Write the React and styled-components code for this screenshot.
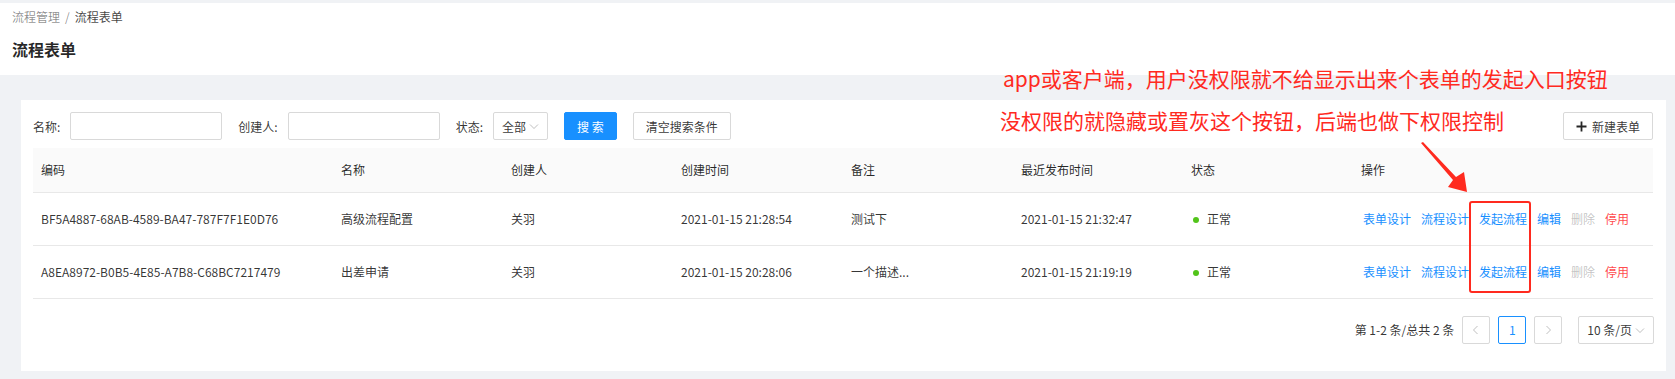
import React from 'react';
import styled, { createGlobalStyle } from 'styled-components';

const GlobalStyle = createGlobalStyle`
  * { box-sizing: border-box; }
  body {
    margin: 0;
    background: #f0f2f5;
    font-family: "Noto Sans CJK SC", "Noto Sans", sans-serif;
    color: rgba(0, 0, 0, 0.65);
  }
`;

const Page = styled.div`
  position: relative;
  width: 1675px;
  height: 379px;
  padding-top: 3px;
  overflow: hidden;
`;

const Header = styled.div`
  background: #fff;
  height: 72px;
  padding: 4px 12px 0;
`;

const Crumbs = styled.div`
  display: flex;
  align-items: center;
  font-size: 12px;
  line-height: 20px;
  color: rgba(0, 0, 0, 0.45);
`;

const Sep = styled.span`
  margin: 0 5px;
`;

const Current = styled.span`
  color: rgba(0, 0, 0, 0.75);
`;

const Title = styled.h1`
  margin: 10px 0 0;
  font-size: 16px;
  line-height: 24px;
  font-weight: 600;
  color: rgba(0, 0, 0, 0.85);
`;

const Content = styled.div`
  padding: 25px 9px 8px 21px;
`;

const Card = styled.div`
  background: #fff;
  height: 271px;
  padding: 12px;
`;

const Toolbar = styled.div`
  display: flex;
  align-items: center;
  height: 28px;
  margin-bottom: 8px;
`;

const Label = styled.span`
  font-size: 12px;
  color: rgba(0, 0, 0, 0.8);
  margin-right: 10px;
  white-space: nowrap;
`;

const Input = styled.input`
  width: ${p => p.w}px;
  height: 28px;
  border: 1px solid #d9d9d9;
  border-radius: 2px;
  margin-right: 16px;
  outline: none;
`;

const Select = styled.div`
  display: flex;
  align-items: center;
  height: 28px;
  padding: 0 8px;
  border: 1px solid #d9d9d9;
  border-radius: 2px;
  font-size: 12px;
  color: rgba(0, 0, 0, 0.8);
  margin-right: ${p => p.mr || 0}px;
  gap: 3px;
`;

const Button = styled.button`
  display: flex;
  align-items: center;
  gap: 5px;
  height: 28px;
  padding: 0 12px;
  font-family: inherit;
  font-size: 12px;
  border-radius: 2px;
  border: 1px solid ${p => (p.primary ? '#1890ff' : '#d9d9d9')};
  background: ${p => (p.primary ? '#1890ff' : '#fff')};
  color: ${p => (p.primary ? '#fff' : 'rgba(0,0,0,0.8)')};
  margin-right: 16px;
  margin-left: ${p => (p.pushRight ? 'auto' : '0')};
  ${p => p.pushRight && 'margin-right: 1px;'}
`;

const Table = styled.table`
  width: 1620px;
  border-collapse: collapse;
  table-layout: fixed;
  font-size: 12px;
`;

const Th = styled.th`
  height: 44px;
  padding: 0 8px;
  text-align: left;
  font-weight: normal;
  background: #fafafa;
  color: rgba(0, 0, 0, 0.85);
  border-bottom: 1px solid #e8e8e8;
`;

const Td = styled.td`
  height: 53px;
  padding: 0 8px;
  color: rgba(0, 0, 0, 0.8);
  border-bottom: 1px solid #e8e8e8;
  white-space: nowrap;
`;

const Dot = styled.span`
  display: inline-block;
  width: 6px;
  height: 6px;
  border-radius: 50%;
  background: #52c41a;
  margin: 0 8px 1px 2px;
  vertical-align: middle;
`;

const Actions = styled.div`
  display: flex;
  gap: 10px;
  padding-left: 2px;
`;

const Link = styled.span`
  color: ${p => (p.kind === 'danger' ? '#ff4d4f' : p.kind === 'disabled' ? 'rgba(0,0,0,0.25)' : '#1890ff')};
`;

const Pager = styled.div`
  display: flex;
  justify-content: flex-end;
  align-items: center;
  gap: 8px;
  margin-top: 17px;
  font-size: 12px;
  color: rgba(0, 0, 0, 0.8);
`;

const PageItem = styled.div`
  width: 28px;
  height: 28px;
  display: flex;
  align-items: center;
  justify-content: center;
  border: 1px solid ${p => (p.active ? '#1890ff' : '#d9d9d9')};
  border-radius: 2px;
  color: ${p => (p.active ? '#1890ff' : 'rgba(0,0,0,0.25)')};
  font-size: 12px;
`;

const SizeWrap = styled.div`
  margin-left: 8px;
`;

const Note = styled.div`
  position: absolute;
  left: ${p => p.x}px;
  top: ${p => p.y}px;
  font-size: 21px;
  line-height: 28px;
  color: #ff2a1f;
  white-space: nowrap;
`;

const Highlight = styled.div`
  position: absolute;
  left: 1469px;
  top: 201px;
  width: 62px;
  height: 92px;
  border: 2px solid #ff2a1f;
  border-radius: 3px;
`;

const ArrowSvg = styled.svg`
  position: absolute;
  left: 1415px;
  top: 138px;
`;

const Chevron = ({ dir = 'down', color = 'rgba(0,0,0,0.25)' }) => {
  const d = {
    down: 'M1 3.5 L5 7.5 L9 3.5',
    left: 'M6.5 1 L2.5 5 L6.5 9',
    right: 'M3.5 1 L7.5 5 L3.5 9',
  }[dir];
  return (
    <svg width="10" height="10" viewBox="0 0 10 10">
      <path d={d} fill="none" stroke={color} strokeWidth="1" />
    </svg>
  );
};

const Plus = () => (
  <svg width="11" height="11" viewBox="0 0 11 11">
    <path d="M5.5 0.5 V10.5 M0.5 5.5 H10.5" stroke="rgba(0,0,0,0.85)" strokeWidth="1.8" />
  </svg>
);

const columns = [
  ['编码', 300],
  ['名称', 170],
  ['创建人', 170],
  ['创建时间', 170],
  ['备注', 170],
  ['最近发布时间', 170],
  ['状态', 170],
  ['操作', 300],
];

const rows = [
  {
    code: 'BF5A4887-68AB-4589-BA47-787F7F1E0D76',
    name: '高级流程配置',
    creator: '关羽',
    created: '2021-01-15 21:28:54',
    note: '测试下',
    published: '2021-01-15 21:32:47',
  },
  {
    code: 'A8EA8972-B0B5-4E85-A7B8-C68BC7217479',
    name: '出差申请',
    creator: '关羽',
    created: '2021-01-15 20:28:06',
    note: '一个描述...',
    published: '2021-01-15 21:19:19',
  },
];

export default function App() {
  return (
    <Page>
      <GlobalStyle />
      <Header>
        <Crumbs>
          <span>流程管理</span>
          <Sep>/</Sep>
          <Current>流程表单</Current>
        </Crumbs>
        <Title>流程表单</Title>
      </Header>
      <Content>
        <Card>
          <Toolbar>
            <Label>名称:</Label>
            <Input w={152} />
            <Label>创建人:</Label>
            <Input w={152} />
            <Label>状态:</Label>
            <Select mr={16}>
              全部 <Chevron />
            </Select>
            <Button primary>搜 索</Button>
            <Button>清空搜索条件</Button>
            <Button pushRight>
              <Plus />
              新建表单
            </Button>
          </Toolbar>
          <Table>
            <colgroup>
              {columns.map(([t, w]) => (
                <col key={t} style={{ width: w }} />
              ))}
            </colgroup>
            <thead>
              <tr>
                {columns.map(([t]) => (
                  <Th key={t}>{t}</Th>
                ))}
              </tr>
            </thead>
            <tbody>
              {rows.map(r => (
                <tr key={r.code}>
                  <Td>{r.code}</Td>
                  <Td>{r.name}</Td>
                  <Td>{r.creator}</Td>
                  <Td>{r.created}</Td>
                  <Td>{r.note}</Td>
                  <Td>{r.published}</Td>
                  <Td>
                    <Dot />
                    正常
                  </Td>
                  <Td>
                    <Actions>
                      <Link>表单设计</Link>
                      <Link>流程设计</Link>
                      <Link>发起流程</Link>
                      <Link>编辑</Link>
                      <Link kind="disabled">删除</Link>
                      <Link kind="danger">停用</Link>
                    </Actions>
                  </Td>
                </tr>
              ))}
            </tbody>
          </Table>
          <Pager>
            <span>第 1-2 条/总共 2 条</span>
            <PageItem>
              <Chevron dir="left" />
            </PageItem>
            <PageItem active>1</PageItem>
            <PageItem>
              <Chevron dir="right" />
            </PageItem>
            <SizeWrap>
              <Select>
                10 条/页 <Chevron />
              </Select>
            </SizeWrap>
          </Pager>
        </Card>
      </Content>

      <Note x={1003} y={64}>app或客户端，用户没权限就不给显示出来个表单的发起入口按钮</Note>
      <Note x={1000} y={106}>没权限的就隐藏或置灰这个按钮，后端也做下权限控制</Note>
      <Highlight />
      <ArrowSvg width="56" height="58" viewBox="1415 138 56 58">
        <polygon
          points="1421,143 1423,142 1456,177 1464,172 1467,192 1448,187 1453,180"
          fill="#ff2a1f"
        />
      </ArrowSvg>
    </Page>
  );
}
